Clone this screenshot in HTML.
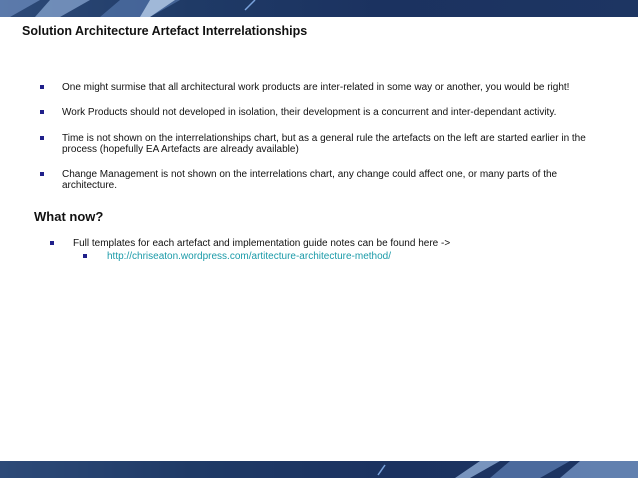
<!DOCTYPE html>
<html><head><style>
body{margin:0;width:638px;height:478px;position:relative;background:#fff;font-family:"Liberation Sans",sans-serif;overflow:hidden}
.bar{position:absolute;left:0;width:638px;height:17px;background:linear-gradient(90deg,#2d4a78 0%,#1f3a66 30%,#1b3260 60%,#1d3562 100%)}
.t{position:absolute;white-space:nowrap;font-size:10px;color:#111}
.b{position:absolute;width:4px;height:4px;background:#1f1f8a}
</style></head><body>
<div class="bar" style="top:0px">
<svg width="638" height="17" style="position:absolute;left:0;top:0">
<polygon points="0,0 40,0 10,17 0,17" fill="#6f8fc0" opacity=".7"/>
<polygon points="50,0 90,0 60,17 35,17" fill="#9fbde6" opacity=".6"/>
<polygon points="120,0 180,0 150,17 100,17" fill="#5c7fb5" opacity=".6"/>
<polygon points="150,0 175,0 150,17 140,17" fill="#c8dcf4" opacity=".7"/>
<line x1="255" y1="0" x2="245" y2="10" stroke="#7aa3dd" stroke-width="1.5"/>
</svg></div>
<div class="bar" style="top:461px">
<svg width="638" height="17" style="position:absolute;left:0;top:0">
<polygon points="480,0 500,0 470,17 455,17" fill="#9fbde6" opacity=".7"/>
<polygon points="510,0 570,0 540,17 490,17" fill="#6b8fc5" opacity=".6"/>
<polygon points="580,0 638,0 638,17 560,17" fill="#8fb2e3" opacity=".6"/>
<line x1="385" y1="4" x2="378" y2="14" stroke="#7aa3dd" stroke-width="1.5"/>
</svg></div>
<div class="t" style="left:22px;top:24px;font-size:12.5px;font-weight:bold">Solution Architecture Artefact Interrelationships</div>
<div class="b" style="left:40px;top:85px"></div>
<div class="t" style="left:62px;top:82px">One might surmise that all architectural work products are inter-related in some way or another, you would be right!</div>
<div class="b" style="left:40px;top:110px"></div>
<div class="t" style="left:62px;top:107px">Work Products should not developed in isolation, their development is a concurrent and inter-dependant activity.</div>
<div class="b" style="left:40px;top:136px"></div>
<div class="t" style="left:62px;top:133px;line-height:11px">Time is not shown on the interrelationships chart, but as a general rule the artefacts on the left are started earlier in the<br>process (hopefully EA Artefacts are already available)</div>
<div class="b" style="left:40px;top:172px"></div>
<div class="t" style="left:62px;top:169px;line-height:11px">Change Management is not shown on the interrelations chart, any change could affect one, or many parts of the<br>architecture.</div>
<div class="t" style="left:34px;top:209px;font-size:13px;font-weight:bold">What now?</div>
<div class="b" style="left:50px;top:241px"></div>
<div class="t" style="left:73px;top:238px">Full templates for each artefact and implementation guide notes can be found here -&gt;</div>
<div class="b" style="left:83px;top:254px"></div>
<div class="t" style="left:107px;top:251px;color:#1a9aa8">http://chriseaton.wordpress.com/artitecture-architecture-method/</div>
</body></html>
